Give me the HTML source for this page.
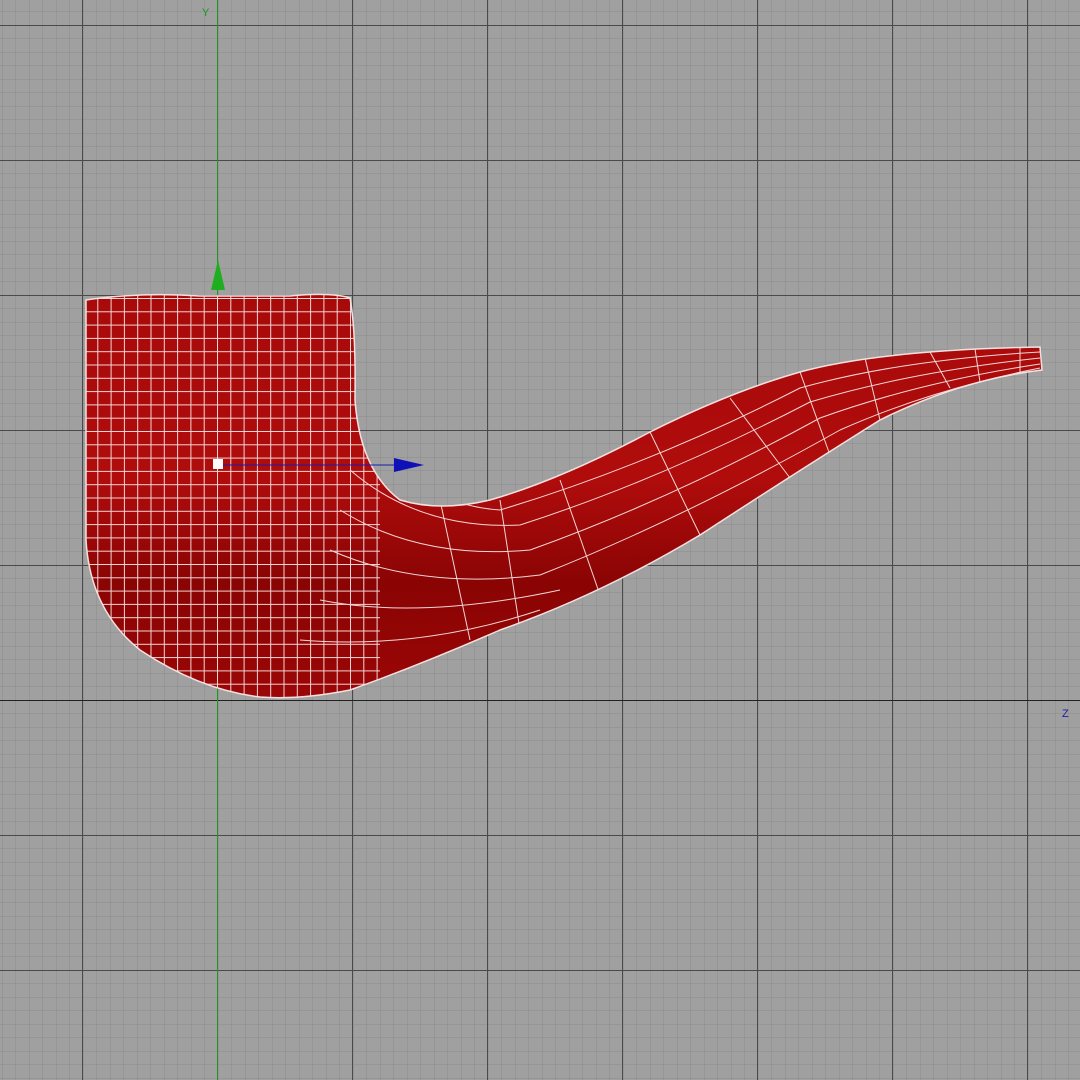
<!DOCTYPE html>
<html><head><style>html,body{margin:0;padding:0;background:#a0a0a0}svg{display:block}</style></head>
<body>
<svg width="1080" height="1080" viewBox="0 0 1080 1080" xmlns="http://www.w3.org/2000/svg">
<defs>
<pattern id="minor" x="2" y="25" width="13.5" height="13.5" patternUnits="userSpaceOnUse">
<path d="M0 0H13.5M0 0V13.5" stroke="#8b8b8b" stroke-width="1" fill="none"/>
</pattern>
<pattern id="major" x="82" y="25" width="135" height="135" patternUnits="userSpaceOnUse">
<path d="M0 0.5H135M0.5 0V135" stroke="#4a4a4a" stroke-width="1" fill="none"/>
</pattern>
<pattern id="wire" x="84" y="298" width="13.3" height="13.3" patternUnits="userSpaceOnUse">
<path d="M0 0.5H13.3M0.5 0V13.3" stroke="#f2d6d6" stroke-width="1" fill="none"/>
</pattern>
<clipPath id="pipe"><path id="pp" d="M86 300 Q140 292 200 296 L290 296 Q330 292 350 298 Q356 330 355 400 Q360 470 400 500 Q440 512 490 500 Q560 480 650 432 Q730 392 800 372 Q880 350 1040 347 L1042 370 Q960 380 880 420 Q800 470 700 535 Q600 595 500 630 Q420 665 350 690 Q300 700 260 697 Q200 690 140 650 Q90 610 86 540 Z"/></clipPath>
<linearGradient id="rg" x1="0" y1="0" x2="0" y2="1">
<stop offset="0" stop-color="#a80a0a"/><stop offset="0.45" stop-color="#b00c0c"/><stop offset="0.7" stop-color="#8a0404"/><stop offset="1" stop-color="#9e0606"/>
</linearGradient>
</defs>
<rect width="1080" height="1080" fill="#a0a0a0"/>
<rect width="1080" height="1080" fill="url(#minor)"/>
<rect width="1080" height="1080" fill="url(#major)"/>
<line x1="0" y1="700.5" x2="1080" y2="700.5" stroke="#222" stroke-width="1"/>
<line x1="217.5" y1="0" x2="217.5" y2="1080" stroke="#1a9a1a" stroke-width="1"/>
<g clip-path="url(#pipe)">
<rect x="80" y="290" width="970" height="420" fill="url(#rg)"/>
<rect x="80" y="290" width="300" height="420" fill="url(#wire)"/>
<g stroke="#f2d6d6" stroke-width="1" fill="none">
<path d="M360 430 Q420 505 500 510 Q650 465 800 388 Q900 360 1040 352"/>
<path d="M350 470 Q420 530 520 525 Q660 480 810 402 Q910 372 1040 358"/>
<path d="M340 510 Q420 560 530 550 Q670 500 820 418 Q920 382 1040 364"/>
<path d="M330 550 Q420 590 540 575 Q680 520 840 430 Q930 390 1040 368"/>
<path d="M320 600 Q420 620 560 590"/>
<path d="M300 640 Q420 650 540 610"/>
<path d="M440 500 L470 640"/><path d="M500 500 L520 630"/><path d="M560 480 L600 595"/>
<path d="M650 432 L700 535"/><path d="M730 398 L790 478"/><path d="M800 372 L830 455"/>
<path d="M865 358 L880 420"/><path d="M930 352 L950 388"/><path d="M975 349 L980 382"/><path d="M1020 347 L1020 373"/>
</g>
</g>
<use href="#pp" fill="none" stroke="#f4e0e0" stroke-width="1.5"/>
<polygon points="218,260 211,290 225,290" fill="#1fae1f"/>
<line x1="222" y1="465" x2="400" y2="465" stroke="#1a1ab0" stroke-width="1"/>
<polygon points="424,465 394,458 394,472" fill="#1010b8"/>
<rect x="213" y="459" width="10" height="10" fill="#fff"/>
<text x="202" y="16" font-family="Liberation Sans, sans-serif" font-size="11" fill="#1a9a1a">Y</text>
<text x="1062" y="717" font-family="Liberation Sans, sans-serif" font-size="11" fill="#1a1ab0">Z</text>
</svg>
</body></html>
